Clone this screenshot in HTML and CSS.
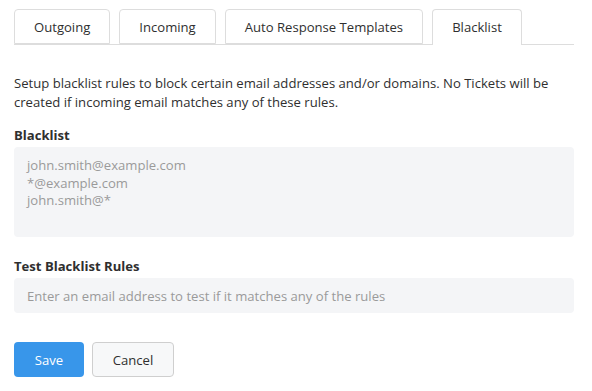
FILE: index.html
```html
<!DOCTYPE html>
<html lang="en">
<head>
    <meta charset="UTF-8">
    <meta name="viewport" content="width=device-width, initial-scale=1.0">
    <title>Email Settings - Blacklist</title>
    <link rel="stylesheet" href="styles.css">
</head>
<body>
    <div class="settings">
        <ul class="tabs">
            <li class="tab">Outgoing</li>
            <li class="tab">Incoming</li>
            <li class="tab">Auto Response Templates</li>
            <li class="tab active">Blacklist</li>
        </ul>

        <p class="intro">Setup blacklist rules to block certain email addresses and/or domains. No Tickets will be created if incoming email matches any of these rules.</p>

        <div class="field">
            <label for="blacklist">Blacklist</label>
            <textarea id="blacklist" placeholder="john.smith@example.com
*@example.com
john.smith@*"></textarea>
        </div>

        <div class="field">
            <label for="test-rules">Test Blacklist Rules</label>
            <input type="text" id="test-rules" placeholder="Enter an email address to test if it matches any of the rules">
        </div>

        <div class="actions">
            <button class="btn btn-primary">Save</button>
            <button class="btn btn-default">Cancel</button>
        </div>
    </div>
</body>
</html>
```

FILE: styles.css
```css
body {
    margin: 0;
    padding: 9px 18px 0 14px;
    font-family: 'Open Sans', 'Liberation Sans', sans-serif;
    font-size: 13.1px;
    color: #2f2f2f;
    background-color: #fff;
}
.tabs {
    display: flex;
    gap: 9px;
    list-style: none;
    margin: 0;
    padding: 0;
    border-bottom: 1px solid #dddddd;
}
.tab {
    padding: 0 19px;
    height: 35px;
    line-height: 35px;
    margin-bottom: -1px;
    border: 1px solid #dddddd;
    border-bottom: none;
    border-radius: 4px 4px 0 0;
    background-color: #fff;
    color: #2f2f2f;
    cursor: pointer;
}
.tab:not(.active) {
    height: 33px;
    line-height: 34px;
    border-bottom: 1px solid #dddddd;
}
.intro {
    margin: 29px 0 0;
    line-height: 19px;
    padding-right: 4px;
}
.field {
    margin-top: 14px;
}
.field + .field {
    margin-top: 20px;
}
.field label {
    display: block;
    font-weight: bold;
    line-height: 19px;
    margin-bottom: 2px;
}
textarea,
input[type="text"] {
    display: block;
    width: 100%;
    box-sizing: border-box;
    border: none;
    border-radius: 4px;
    background-color: #f4f5f7;
    font-family: inherit;
    font-size: 13.1px;
    color: #2f2f2f;
    padding: 9px 13px;
    outline: none;
}
textarea {
    height: 90px;
    padding-top: 10px;
    line-height: 17.5px;
    resize: none;
}
input[type="text"] {
    height: 35px;
}
textarea::placeholder,
input::placeholder {
    color: #9a9a9a;
}
.actions {
    display: flex;
    gap: 8px;
    margin-top: 29px;
}
.btn {
    height: 35px;
    border-radius: 4px;
    font-family: inherit;
    font-size: 13.1px;
    cursor: pointer;
}
.btn-primary {
    width: 70px;
    border: none;
    background-color: #3896ea;
    color: #fff;
}
.btn-default {
    width: 82px;
    border: 1px solid #cfcfcf;
    background-color: #f7f8f9;
    color: #2f2f2f;
}
```
